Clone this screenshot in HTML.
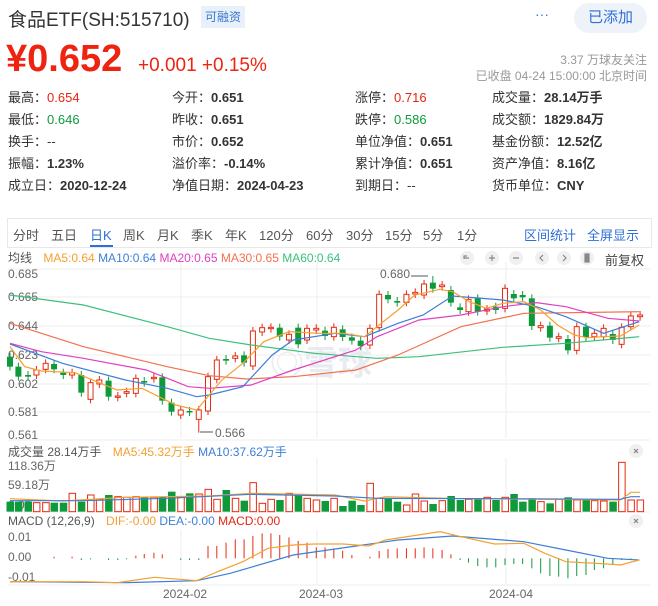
<!DOCTYPE html>
<html><head><meta charset="utf-8">
<style>
*{margin:0;padding:0;box-sizing:border-box}
body{width:658px;height:606px;background:#fff;font-family:"Liberation Sans","Noto Sans CJK SC",sans-serif;color:#333;position:relative;overflow:hidden}
.a{position:absolute;white-space:nowrap}
.r{color:#e6250f}.g{color:#0c9a3c}.b{font-weight:bold}
.row{position:absolute;font-size:13px;line-height:16px}
.tab{position:absolute;top:225px;font-size:13px;color:#555}
</style></head><body>
<div class="a" style="left:8px;top:5px;font-size:19px;color:#333">食品ETF(SH:515710)</div>
<div class="a" style="left:201px;top:6px;width:44px;height:22px;background:#e8f0fa;color:#3b78d0;font-size:12px;line-height:22px;text-align:center">可融资</div>
<div class="a" style="left:535px;top:6px;font-size:14px;color:#3a7bd5">···</div>
<div class="a" style="left:574px;top:3px;width:73px;height:30px;background:#eef2f9;border-radius:15px;color:#2f6fd6;font-size:15px;line-height:30px;text-align:center">已添加</div>
<div class="a r b" style="left:6px;top:38px;font-size:38px;line-height:42px;color:#ee2410">¥0.652</div>
<div class="a r" style="left:138px;top:55px;font-size:19px;color:#ee2410">+0.001 +0.15%</div>
<div class="a" style="right:11px;top:51px;font-size:12px;color:#999">3.37 万球友关注</div>
<div class="a" style="right:11px;top:67px;font-size:12px;color:#999">已收盘 04-24 15:00:00 北京时间</div>

<div class="row" style="left:8px;top:90px">最高：<span class="r">0.654</span></div>
<div class="row" style="left:8px;top:112px">最低：<span class="g">0.646</span></div>
<div class="row" style="left:8px;top:134px">换手：--</div>
<div class="row" style="left:8px;top:156px">振幅：<b>1.23%</b></div>
<div class="row" style="left:8px;top:178px">成立日：<b>2020-12-24</b></div>
<div class="row" style="left:172px;top:90px">今开：<b>0.651</b></div>
<div class="row" style="left:172px;top:112px">昨收：<b>0.651</b></div>
<div class="row" style="left:172px;top:134px">市价：<b>0.652</b></div>
<div class="row" style="left:172px;top:156px">溢价率：<b>-0.14%</b></div>
<div class="row" style="left:172px;top:178px">净值日期：<b>2024-04-23</b></div>
<div class="row" style="left:355px;top:90px">涨停：<span class="r">0.716</span></div>
<div class="row" style="left:355px;top:112px">跌停：<span class="g">0.586</span></div>
<div class="row" style="left:355px;top:134px">单位净值：<b>0.651</b></div>
<div class="row" style="left:355px;top:156px">累计净值：<b>0.651</b></div>
<div class="row" style="left:355px;top:178px">到期日：--</div>
<div class="row" style="left:492px;top:90px">成交量：<b>28.14万手</b></div>
<div class="row" style="left:492px;top:112px">成交额：<b>1829.84万</b></div>
<div class="row" style="left:492px;top:134px">基金份额：<b>12.52亿</b></div>
<div class="row" style="left:492px;top:156px">资产净值：<b>8.16亿</b></div>
<div class="row" style="left:492px;top:178px">货币单位：<b>CNY</b></div>

<div class="a" style="left:7px;top:218px;width:645px;height:30px;border:1px solid #e8e8e8"></div>
<div class="tab" style="left:13px">分时</div>
<div class="tab" style="left:51px">五日</div>
<div class="tab" style="left:90px;color:#2f6fd6">日K</div>
<div class="a" style="left:90px;top:245px;width:23px;height:2px;background:#2f6fd6"></div>
<div class="tab" style="left:123px">周K</div>
<div class="tab" style="left:157px">月K</div>
<div class="tab" style="left:191px">季K</div>
<div class="tab" style="left:225px">年K</div>
<div class="tab" style="left:259px">120分</div>
<div class="tab" style="left:306px">60分</div>
<div class="tab" style="left:346px">30分</div>
<div class="tab" style="left:385px">15分</div>
<div class="tab" style="left:423px">5分</div>
<div class="tab" style="left:457px">1分</div>
<div class="tab" style="left:524px;color:#2f6fd6">区间统计</div>
<div class="tab" style="left:587px;color:#2f6fd6">全屏显示</div>

<div class="a" style="left:8px;top:249px;font-size:12px;color:#555">均线 <span style="color:#f5a030;margin-left:8px">MA5:0.64</span> <span style="color:#3c7fd8">MA10:0.64</span> <span style="color:#e040c0">MA20:0.65</span> <span style="color:#f4704f">MA30:0.65</span> <span style="color:#3cc07d">MA60:0.64</span></div>
<div class="a" style="left:605px;top:250px;font-size:13px;color:#444">前复权</div>
<div class="a" style="left:8px;top:443px;font-size:12px;color:#555">成交量 28.14万手 <span style="color:#f5a030;margin-left:8px">MA5:45.32万手</span> <span style="color:#3c7fd8">MA10:37.62万手</span></div>
<div class="a" style="left:8px;top:514px;font-size:12px;color:#555">MACD (12,26,9) <span style="color:#f5a030;margin-left:8px">DIF:-0.00</span> <span style="color:#3c7fd8">DEA:-0.00</span> <span style="color:#e6250f">MACD:0.00</span></div>

<svg class="a" style="left:0;top:0" width="658" height="606" id="s">
<g fill="#f0f0f0">
<circle cx="467" cy="258" r="7"/><circle cx="492" cy="258" r="7"/><circle cx="516" cy="258" r="7"/><circle cx="542" cy="258" r="7"/><circle cx="564" cy="258" r="7"/><circle cx="587" cy="258" r="7"/>
<circle cx="636" cy="451" r="7"/><circle cx="636" cy="521" r="7"/></g>
<g stroke="#888" stroke-width="1.2" fill="none">
<path d="M464 258h5M492 255v6M489 258h6M513 258h6M543 255l-3 3l3 3M563 255l3 3l-3 3M467 256h-3v3"/>
<rect x="585" y="254" width="4" height="8" fill="#888"/>
<path d="M634 449l4 4M638 449l-4 4M634 519l4 4M638 519l-4 4"/>
</g>
<g stroke="#eeeeee" stroke-width="1">
<path d="M8 269H650M8 297H650M8 326H650M8 355H650M8 384H650M8 412H650M8 440H650M181 262V438M317 262V438M506 262V438"/>
<path d="M8 512H650M181 458V512M317 458V512M506 458V512M181 530V585M317 530V585M506 530V585M8 585H650"/>
</g>
<g font-size="12" fill="#666" font-family="Liberation Sans,sans-serif">
<text x="8" y="278">0.685</text><text x="8" y="301">0.665</text><text x="8" y="330">0.644</text><text x="8" y="359">0.623</text><text x="8" y="388">0.602</text><text x="8" y="416">0.581</text><text x="8" y="439">0.561</text>
<text x="380" y="278">0.680</text><text x="215" y="437">0.566</text>
<text x="8" y="470">118.36万</text><text x="8" y="489">59.18万</text><text x="8" y="509">0.00</text>
<text x="8" y="541">0.01</text><text x="8" y="561">0.00</text><text x="8" y="581">-0.01</text>
<text x="163" y="598">2024-02</text><text x="299" y="598">2024-03</text><text x="489" y="598">2024-04</text>
</g>
<path d="M411 276H428M200 432H213" stroke="#555" fill="none"/>
<text x="270" y="375" font-size="34" fill="#e8ebf0" font-weight="bold" font-family="Noto Sans CJK SC,sans-serif">◎雪球</text>
<g id="c"></g>
</svg>
<script>
var ns="http://www.w3.org/2000/svg",G=document.getElementById('c');
function el(t,a){var e=document.createElementNS(ns,t);for(var k in a)e.setAttribute(k,a[k]);G.appendChild(e);}
function X(z){return 10+(z-25)*0.4195}function Y(z){return 210+z/3}
var C=[[25,'g',440,470],[45,'g',470,500],[68,'g',495,500],[88,'r',480,495],[110,'r',460,478],[130,'g',462,478],[152,'g',488,495],[173,'r',488,495],[195,'g',495,548],[217,'r',518,568],[238,'r',510,522],[260,'g',512,560],[282,'r',558,562],[303,'r',545,550],[325,'r',505,550],[345,'g',513,518],[368,'r',502,506],[388,'g',502,572],[410,'g',578,605],[432,'r',600,615],[453,'g',603,606],[475,'r',600,628],[497,'r',500,603],[518,'r',450,508],[540,'g',447,452],[562,'r',438,445],[583,'g',436,458],[604,'r',363,468],[626,'r',353,366],[647,'r',352,356],[668,'g',353,380],[690,'r',373,390],[712,'g',353,403],[733,'r',355,390],[755,'r',355,360],[776,'g',362,378],[797,'r',352,380],[818,'g',358,381],[840,'g',382,392],[861,'g',392,408],[883,'r',355,405],[905,'r',253,353],[926,'g',255,268],[948,'g',273,278],[970,'r',253,277],[991,'r',247,252],[1012,'r',222,255],[1033,'g',218,236],[1055,'r',225,230],[1076,'g',240,278],[1098,'g',292,300],[1118,'r',268,305],[1140,'g',265,305],[1162,'r',297,303],[1183,'g',290,300],[1205,'r',235,295],[1226,'g',252,265],[1247,'g',255,262],[1269,'g',265,348],[1290,'r',347,353],[1312,'g',347,383],[1333,'r',380,385],[1355,'g',387,421],[1376,'r',350,421],[1398,'g',350,382],[1418,'r',370,380],[1440,'r',355,380],[1462,'g',372,390],[1483,'r',352,403],[1505,'r',318,350],[1527,'r',315,320]];
var RC='#e62a0f',GC='#0e9a3a';
C.forEach(function(c,i){var x=X(c[0]),t=Y(c[2]),b=Y(c[3]),col=c[1]=='r'?RC:GC;
var lo=b+4,hi=t-4;if(i==21)lo=Y(668);if(i==47)hi=Y(198);
el('line',{x1:x,x2:x,y1:hi,y2:lo,stroke:col,'stroke-width':1});
if(c[1]=='r')el('rect',{x:x-2.5,y:t,width:5,height:Math.max(b-t,1),fill:'#fff',stroke:col,'stroke-width':1});
else el('rect',{x:x-3,y:t,width:6,height:Math.max(b-t,1.5),fill:col});});
function line(p,col){el('polyline',{points:p.map(function(q){return X(q[0])+','+Y(q[1])}).join(' '),fill:'none',stroke:col,'stroke-width':1.2});}
line([[25,255],[200,285],[400,350],[500,385],[600,405],[750,430],[900,445],[1000,440],[1200,412],[1350,400],[1525,380]],'#3cc07d');
line([[25,340],[200,410],[400,470],[500,497],[590,507],[700,500],[850,480],[950,435],[1100,350],[1250,310],[1525,305]],'#f4704f');
line([[25,400],[100,425],[200,445],[350,480],[450,530],[500,535],[600,525],[700,480],[850,420],[900,380],[1000,330],[1100,315],[1200,290],[1280,278],[1350,290],[1450,325],[1525,333]],'#e040c0');
line([[25,402],[150,460],[300,510],[400,535],[470,560],[500,555],[580,530],[650,435],[700,390],[800,370],[870,380],[950,340],[1010,315],[1080,258],[1200,270],[1280,290],[1350,320],[1440,370],[1525,335]],'#3c7fd8');
line([[25,410],[60,470],[100,483],[180,488],[280,540],[340,535],[420,585],[470,600],[530,510],[580,460],[630,395],[690,365],[760,370],[820,370],[870,380],[900,350],[950,300],[990,255],[1050,238],[1080,245],[1120,275],[1160,295],[1200,280],[1250,275],[1290,300],[1330,345],[1370,375],[1400,383],[1440,380],[1480,378],[1525,345]],'#f5a030');
var V=[185,185,185,188,188,188,188,160,185,165,178,165,170,172,170,172,172,170,155,172,160,162,148,178,150,175,182,128,190,178,180,160,165,175,180,183,175,198,182,195,130,175,175,185,195,162,183,192,182,168,180,178,178,172,180,172,162,185,175,185,190,178,172,180,178,182,183,185,67,180,180];
var base=440+215/3;
C.forEach(function(c,i){var x=X(c[0]),t=440+(V[i]||180)/3,col=c[1]=='r'?RC:GC;
if(c[1]=='r')el('rect',{x:x-3,y:t,width:6.5,height:base-t,fill:'#fff',stroke:col,'stroke-width':1});
else el('rect',{x:x-3.5,y:t,width:7.5,height:base-t,fill:col});});
function vl(p,col){el('polyline',{points:p.map(function(q){return X(q[0])+','+(440+q[1]/3)}).join(' '),fill:'none',stroke:col,'stroke-width':1.2});}
vl([[25,176],[150,183],[300,172],[500,168],[600,160],[800,165],[870,183],[920,170],[1100,176],[1300,178],[1480,180],[1505,157],[1527,157]],'#f5a030');
vl([[25,182],[200,182],[400,175],[600,163],[800,168],[900,175],[1200,176],[1480,178],[1505,170],[1527,170]],'#3c7fd8');
var M=[355,355,358,355,355,350,355,350,360,358,355,360,360,358,347,342,338,343,355,360,360,360,318,318,308,298,298,288,280,280,285,292,303,308,322,322,325,332,345,355,350,333,327,325,325,325,322,325,330,343,360,368,378,382,382,375,372,372,385,400,408,410,415,408,405,390,385,375,360,358,355];
C.forEach(function(c,i){var x=X(c[0]),z=440+355/3,t=440+M[i]/3;if(Math.abs(t-z)<0.5)return;
el('line',{x1:x,x2:x,y1:z,y2:t,stroke:t<z?RC:GC,'stroke-width':1});});
vl([[25,425],[300,428],[470,422],[550,400],[700,345],[850,318],[950,300],[1080,288],[1250,305],[1350,330],[1450,355],[1525,360]],'#3c7fd8');
vl([[25,425],[200,425],[280,428],[370,412],[470,422],[520,395],[580,365],[640,325],[700,315],[750,312],[820,312],[880,318],[920,300],[1050,275],[1100,290],[1180,312],[1250,310],[1300,340],[1350,365],[1450,372],[1480,375],[1525,360]],'#f5a030');
</script>
</body></html>
